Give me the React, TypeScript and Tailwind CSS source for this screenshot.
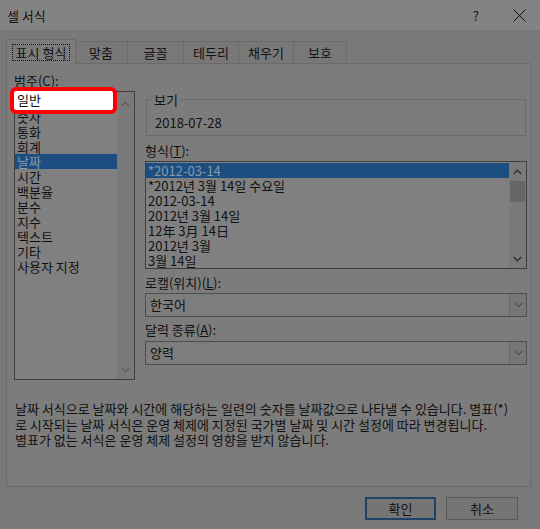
import React from "react";

const categories = ["일반", "숫자", "통화", "회계", "날짜", "시간", "백분율", "분수", "지수", "텍스트", "기타", "사용자 지정"];

const formats = [
  "*2012-03-14",
  "*2012년 3월 14일 수요일",
  "2012-03-14",
  "2012년 3월 14일",
  "12年 3月 14日",
  "2012년 3월",
  "3월 14일",
];

const tabs = [
  { label: "표시 형식", w: "w-[70px]", active: true },
  { label: "맞춤", w: "w-[53px]" },
  { label: "글꼴", w: "w-[56px]" },
  { label: "테두리", w: "w-[55px]" },
  { label: "채우기", w: "w-[55px]" },
  { label: "보호", w: "w-[53px]" },
];

const Chevron = ({ up, color = "#2e2e2e", thin }: { up?: boolean; color?: string; thin?: boolean }) => (
  <svg width="9" height="6" viewBox="0 0 9 6" fill="none">
    <polyline
      points={up ? "0.8,5 4.5,1.3 8.2,5" : "0.8,1 4.5,4.7 8.2,1"}
      stroke={color}
      strokeWidth={thin ? 1 : 1.4}
    />
  </svg>
);

const Combo = ({ value }: { value: string }) => (
  <div className="flex h-[24px] border border-[#4e4e4e] bg-[#7d7d7d]">
    <div className="flex-1 pl-[4px] leading-[22px]">{value}</div>
    <div className="flex w-[17px] items-center justify-center border-l border-[#6a6a6a] bg-[#767676]">
      <Chevron color="#3a3a3a" thin />
    </div>
  </div>
);

export default function App() {
  return (
    <div className="h-[529px] w-[540px] overflow-hidden bg-[#797979] font-['Noto_Sans_CJK_KR','Noto_Sans',sans-serif] text-[13px] text-[#111]">
      {/* title bar */}
      <div className="flex h-[30px] items-center bg-[#838383] pl-[7px] pr-[14px]">
        <span className="leading-[15px]">셀 서식</span>
        <span className="ml-auto mr-[34px] text-[13px] leading-[15px]">?</span>
        <svg width="13" height="13" viewBox="0 0 13 13">
          <path d="M0.5 0.5L12.5 12.5M12.5 0.5L0.5 12.5" stroke="#111" strokeWidth="1" />
        </svg>
      </div>

      {/* tabs */}
      <div className="mt-[9px] flex h-[24px] items-end pl-[6px]">
        {tabs.map((t, i) =>
          t.active ? (
            <div
              key={t.label}
              className={`relative z-10 -mb-[1px] flex h-[25px] items-center justify-center border-x border-t border-[#6b6b6b] bg-[#7c7c7c] ${t.w}`}
            >
              <span className="border border-dotted border-[#111] px-[3px] leading-[15px]">{t.label}</span>
            </div>
          ) : (
            <div
              key={t.label}
              className={`flex h-[22px] items-center justify-center border-r border-t border-[#6b6b6b] bg-[#787878] leading-[15px] ${t.w} ${i === 1 ? "-ml-[1px]" : ""}`}
            >
              {t.label}
            </div>
          )
        )}
      </div>

      {/* tab page */}
      <div className="ml-[6px] h-[424px] w-[525px] border border-[#6b6b6b] bg-[#7c7c7c] pl-[7px] pr-[3px]">
        <div className="flex gap-[10px]">
          {/* category column */}
          <div className="w-[121px] pt-[9px]">
            <div className="h-[15px] leading-[15px]">
              범주(<u>C</u>):
            </div>
            <div className="relative mt-[3px] flex h-[289px] border border-[#3e3e3e] bg-[#808080]">
              <div className="flex-1 pt-[2px]">
                {categories.map((c, i) => (
                  <div
                    key={c}
                    className={`h-[15px] pl-[2px] leading-[15px] ${c === "날짜" ? "bg-[#1c4e82] text-[#8798ab]" : ""} ${i === 0 ? "invisible" : ""}`}
                  >
                    {c}
                  </div>
                ))}
              </div>
              <div className="flex w-[17px] flex-col justify-between bg-[#7a7a7a]">
                <div className="flex h-[22px] items-center justify-center pt-[2px]">
                  <Chevron up color="#5e5e5e" />
                </div>
                <div className="flex h-[19px] items-center justify-center">
                  <Chevron color="#5e5e5e" />
                </div>
              </div>
              {/* highlight annotation */}
              <div className="absolute left-[-5px] top-[-5px] h-[27px] w-[107px] rounded-[6px] border-[4px] border-[#ff0000] bg-white pl-[3px] leading-[18px] text-[#111]">
                일반
              </div>
            </div>
          </div>

          {/* right column */}
          <div className="w-[382px] pt-[28px]">
            <fieldset className="mx-[1px] border border-[#6a6a6a] px-[8px] pb-[5px]">
              <legend className="ml-[-3px] px-[2px] leading-[15px]">보기</legend>
              <div className="mt-[8px] h-[15px] leading-[15px]">2018-07-28</div>
            </fieldset>

            <div className="mt-[7px] h-[15px] leading-[15px]">
              형식(<u>T</u>):
            </div>
            <div className="mt-[3px] flex h-[108px] border border-[#3e3e3e] bg-[#808080]">
              <div className="flex-1 pt-[1px]">
                {formats.map((f, i) => (
                  <div
                    key={f}
                    className={`h-[15px] pl-[2px] leading-[15px] ${i === 0 ? "bg-[#1c4e82] text-[#8798ab]" : ""}`}
                  >
                    {f}
                  </div>
                ))}
              </div>
              <div className="flex w-[17px] flex-col bg-[#7a7a7a]">
                <div className="flex h-[19px] items-center justify-center">
                  <Chevron up />
                </div>
                <div className="mx-[1px] h-[21px] bg-[#676767]" />
                <div className="mt-auto flex h-[19px] items-center justify-center">
                  <Chevron />
                </div>
              </div>
            </div>

            <div className="mt-[6px] h-[15px] leading-[15px]">
              로캘(위치)(<u>L</u>):
            </div>
            <div className="mt-[3px]">
              <Combo value="한국어" />
            </div>

            <div className="mt-[5px] h-[15px] leading-[15px]">
              달력 종류(<u>A</u>):
            </div>
            <div className="mt-[4px]">
              <Combo value="양력" />
            </div>
          </div>
        </div>

        <div className="mt-[21px] pl-[1px] leading-[15.5px]">
          <div>날짜 서식으로 날짜와 시간에 해당하는 일련의 숫자를 날짜값으로 나타낼 수 있습니다. 별표(*)</div>
          <div>로 시작되는 날짜 서식은 운영 체제에 지정된 국가별 날짜 및 시간 설정에 따라 변경됩니다.</div>
          <div>별표가 없는 서식은 운영 체제 설정의 영향을 받지 않습니다.</div>
        </div>
      </div>

      {/* buttons */}
      <div className="mt-[10px] flex justify-end gap-[10px] pr-[22px]">
        <button className="h-[23px] w-[71px] border-2 border-[#1d4467] bg-[#757575] leading-[19px]">확인</button>
        <button className="h-[23px] w-[72px] border border-[#595959] bg-[#757575] leading-[21px]">취소</button>
      </div>
    </div>
  );
}
